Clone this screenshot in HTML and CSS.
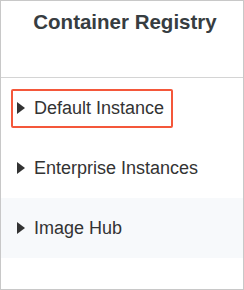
FILE: index.html
```html
<!DOCTYPE html>
<html>
<head>
<meta charset="utf-8">
<link rel="stylesheet" href="styles.css">
</head>
<body>
<div class="panel">
  <div class="header">
    <div class="title">Container Registry</div>
  </div>
  <div class="menu">
    <div class="row">
      <div class="item selected">
        <svg class="caret" width="8" height="12" viewBox="0 0 8 12"><polygon points="0,0 8,6 0,12"/></svg>
        <span class="label">Default Instance</span>
      </div>
    </div>
    <div class="row">
      <div class="item">
        <svg class="caret" width="8" height="12" viewBox="0 0 8 12"><polygon points="0,0 8,6 0,12"/></svg>
        <span class="label">Enterprise Instances</span>
      </div>
    </div>
    <div class="row shaded">
      <div class="item">
        <svg class="caret" width="8" height="12" viewBox="0 0 8 12"><polygon points="0,0 8,6 0,12"/></svg>
        <span class="label">Image Hub</span>
      </div>
    </div>
  </div>
</div>
</body>
</html>
```
FILE: styles.css
```css
html, body {
  margin: 0;
  padding: 0;
  background: #ffffff;
}
.panel {
  width: 244px;
  height: 290px;
  box-sizing: border-box;
  border: 1px solid #c8c8c8;
  font-family: "Liberation Sans", Arial, sans-serif;
  color: #333333;
}
.header {
  height: 77px;
  box-sizing: border-box;
  border-bottom: 1px solid #d4d4d4;
  padding-top: 9px;
  padding-left: 6px;
}
.title {
  text-align: center;
  font-size: 20.5px;
  line-height: 24px;
  font-weight: bold;
  color: #373d41;
}
.menu {
  display: flex;
  flex-direction: column;
}
.row {
  height: 60px;
  display: flex;
  align-items: center;
  padding-left: 10px;
}
.row.shaded {
  background: #f7f9fb;
}
.item {
  display: flex;
  align-items: center;
  gap: 9px;
  height: 39px;
  box-sizing: border-box;
  border: 2px solid transparent;
  border-radius: 2px;
  padding: 0 7px 0 4px;
}
.item.selected {
  border-color: #f4573a;
}
.caret {
  display: block;
  fill: #333333;
}
.label {
  font-size: 18px;
  line-height: 21px;
}
```
